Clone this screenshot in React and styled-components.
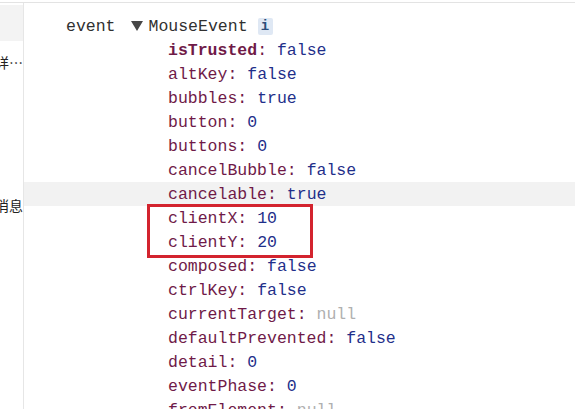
import React from "react";
import styled, { createGlobalStyle } from "styled-components";

const Global = createGlobalStyle`
  html, body { margin: 0; padding: 0; background: #fff; }
  body { font-family: "Liberation Mono", "DejaVu Sans Mono", monospace; }
`;

const Frame = styled.div`
  width: 575px;
  height: 409px;
  overflow: hidden;
  padding-top: 2px;
  box-sizing: border-box;
`;

const Body = styled.div`
  display: flex;
  height: 100%;
  border-top: 1px solid #e3e3e3;
`;

const LeftPane = styled.div`
  width: 23px;
  flex: none;
  border-right: 1px solid #e6e6e6;
  display: flex;
  flex-direction: column;
  overflow: hidden;
`;

const LeftHeader = styled.div`
  height: 36px;
  margin-top: 2px;
  background: #f3f3f3;
`;

const LeftCell = styled.div`
  height: 24px;
  margin-top: ${(p) => p.$gap}px;
  display: flex;
  justify-content: flex-end;
  align-items: center;
  white-space: nowrap;
  overflow: hidden;
  font-family: "Noto Sans CJK SC", "Noto Sans", sans-serif;
  font-size: 14px;
  color: #222;
`;

const Main = styled.div`
  flex: 1;
  padding-top: 11px;
  font-size: 16.5px;
`;

const Row = styled.div`
  height: 24px;
  display: flex;
  align-items: center;
  white-space: nowrap;
  padding-left: ${(p) => p.$indent}px;
  background: ${(p) => (p.$hover ? "#f2f2f2" : "transparent")};
`;

const Label = styled.span`
  color: #303030;
`;

const Arrow = styled.span`
  display: inline-block;
  width: 0;
  height: 0;
  border-left: 6px solid transparent;
  border-right: 6px solid transparent;
  border-top: 10px solid #474747;
  margin: 0 6px 0 15px;
`;

const TypeName = styled.span`
  color: #303030;
`;

const InfoBadge = styled.span`
  display: inline-flex;
  align-items: center;
  justify-content: center;
  width: 15px;
  height: 17px;
  margin-left: 10px;
  background: #dfe8f4;
  border-radius: 2px;
  color: #2b4d7a;
  font-size: 14px;
  font-weight: bold;
`;

const Key = styled.span`
  color: #6f1a48;
  font-weight: ${(p) => (p.$bold ? "bold" : "normal")};
`;

const Value = styled.span`
  color: ${(p) => (p.$null ? "#b0b0b0" : "#1f2f8a")};
`;

const Marked = styled.div`
  position: relative;
  &::after {
    content: "";
    position: absolute;
    left: 123px;
    top: -2px;
    width: 166px;
    height: 54px;
    border: 3px solid #d3232e;
    box-sizing: border-box;
    pointer-events: none;
  }
`;

const props1 = [
  ["isTrusted", "false", { bold: true }],
  ["altKey", "false"],
  ["bubbles", "true"],
  ["button", "0"],
  ["buttons", "0"],
  ["cancelBubble", "false"],
  ["cancelable", "true", { hover: true }],
];
const marked = [
  ["clientX", "10"],
  ["clientY", "20"],
];
const props2 = [
  ["composed", "false"],
  ["ctrlKey", "false"],
  ["currentTarget", "null", { isNull: true }],
  ["defaultPrevented", "false"],
  ["detail", "0"],
  ["eventPhase", "0"],
  ["fromElement", "null", { isNull: true }],
];

function Prop({ k, v, opts = {} }) {
  return (
    <Row $indent={144} $hover={opts.hover}>
      <Key $bold={opts.bold}>{k}</Key>
      <Key>:&nbsp;</Key>
      <Value $null={opts.isNull}>{v}</Value>
    </Row>
  );
}

export default function App() {
  return (
    <Frame>
      <Global />
      <Body>
        <LeftPane>
          <LeftHeader />
          <LeftCell $gap={9}>消息详…</LeftCell>
          <LeftCell $gap={119}>查看消息</LeftCell>
        </LeftPane>
        <Main>
          <Row $indent={42}>
            <Label>event</Label>
            <Arrow />
            <TypeName>MouseEvent</TypeName>
            <InfoBadge>i</InfoBadge>
          </Row>
          {props1.map(([k, v, o]) => (
            <Prop key={k} k={k} v={v} opts={o} />
          ))}
          <Marked>
            {marked.map(([k, v]) => (
              <Prop key={k} k={k} v={v} />
            ))}
          </Marked>
          {props2.map(([k, v, o]) => (
            <Prop key={k} k={k} v={v} opts={o} />
          ))}
        </Main>
      </Body>
    </Frame>
  );
}
